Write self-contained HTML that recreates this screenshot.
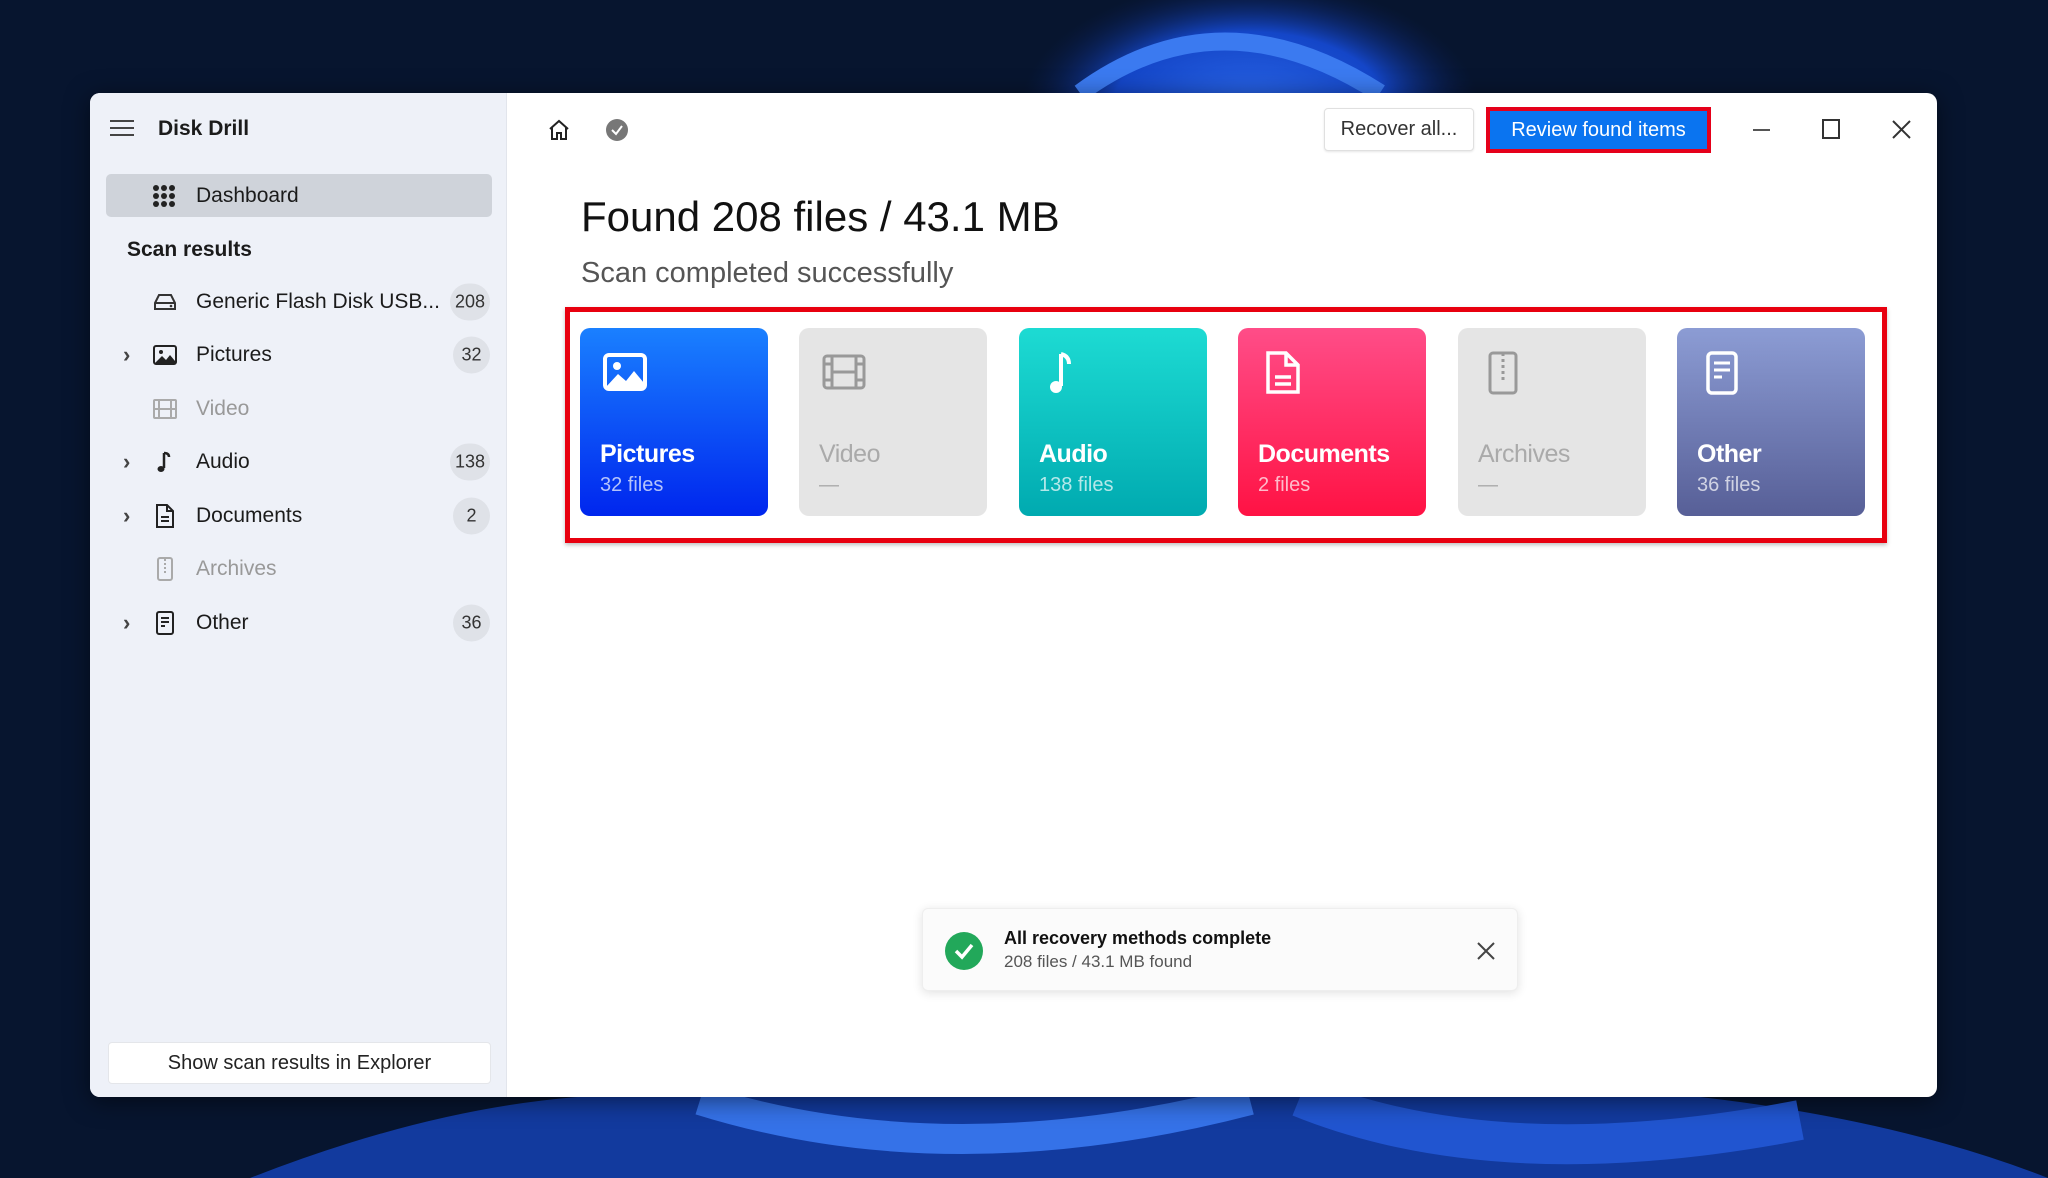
<!DOCTYPE html>
<html><head><meta charset="utf-8"><style>
*{box-sizing:border-box;margin:0;padding:0}
body{width:2048px;height:1178px;overflow:hidden;position:relative;font-family:"Liberation Sans",sans-serif;background:#06122b}
.bg{position:absolute;inset:0}
.win{position:absolute;left:90px;top:93px;width:1847px;height:1004px;background:#fff;border-radius:10px;overflow:hidden;box-shadow:0 4px 24px rgba(0,0,0,.5)}
.side{position:absolute;left:0;top:0;width:417px;height:100%;background:#eef1f8;border-right:1px solid #e2e5ec}
.abs{position:absolute}
.t{position:absolute;white-space:nowrap}
.row{position:absolute;left:0;width:417px;height:40px}
.row .lbl{position:absolute;left:106px;top:50%;transform:translateY(-50%);font-size:21px;color:#1b1b1b}
.row .ic{position:absolute;left:62px;top:50%;transform:translateY(-50%);width:26px;height:26px}
.row .chev{position:absolute;left:33px;top:50%;transform:translateY(-50%);font-size:22px;color:#444;font-weight:bold}
.badge{position:absolute;right:-1px;top:50%;transform:translateY(-50%);min-width:37px;height:37px;border-radius:19px;background:#dfe2e8;font-size:18px;color:#333;text-align:center;line-height:37px;padding:0 5px}
.card{position:absolute;top:235px;width:188px;height:188px;border-radius:10px}
.card .n{position:absolute;left:20px;top:112px;font-size:25px;font-weight:bold;color:#fff;letter-spacing:-0.5px}
.card .s{position:absolute;left:20px;top:146px;font-size:20px;color:rgba(255,255,255,.7)}
.card svg{position:absolute;left:22px;top:22px}
.gray{background:#e5e5e5}.gray .n{color:#aaa;font-weight:normal}.gray .s{color:#aaa}
</style></head><body>
<svg class="bg" width="2048" height="1178">
<defs>
<radialGradient id="g1" cx="0.5" cy="0.5" r="0.5"><stop offset="0" stop-color="#2a66e8"/><stop offset="0.6" stop-color="#1446c8"/><stop offset="1" stop-color="#0a1d55" stop-opacity="0"/></radialGradient>
</defs>
<rect width="2048" height="1178" fill="#07152f"/>
<ellipse cx="1250" cy="110" rx="230" ry="130" fill="url(#g1)"/>
<path d="M1080 93 Q1220 -10 1380 93" stroke="#3b7af0" stroke-width="18" fill="none"/>
<path d="M250 1178 Q500 1080 700 1097 L1700 1097 Q1900 1120 2048 1178 Z" fill="#123a9e"/>
<path d="M700 1100 Q950 1178 1250 1100" stroke="#3572e8" stroke-width="30" fill="none"/>
<path d="M1300 1097 Q1500 1178 1800 1120" stroke="#2155d0" stroke-width="40" fill="none"/>
</svg>
<div class="win">
 <div class="side">
  <svg class="abs" style="left:20px;top:26px" width="24" height="18"><path d="M0 2H24M0 9H24M0 16H24" stroke="#444" stroke-width="2"/></svg>
  <div class="t" style="left:68px;top:24px;font-size:21px;color:#1b1b1b;font-weight:bold">Disk Drill</div>
  <div class="abs" style="left:16px;top:81px;width:386px;height:43px;background:#cfd3da;border-radius:5px"></div>
  <svg class="abs" style="left:63px;top:92px" width="22" height="22"><g fill="#222"><circle cx="3" cy="3" r="3"/><circle cx="11" cy="3" r="3"/><circle cx="19" cy="3" r="3"/><circle cx="3" cy="11" r="3"/><circle cx="11" cy="11" r="3"/><circle cx="19" cy="11" r="3"/><circle cx="3" cy="19" r="3"/><circle cx="11" cy="19" r="3"/><circle cx="19" cy="19" r="3"/></g></svg>
  <div class="t" style="left:106px;top:91px;font-size:21px;color:#1b1b1b">Dashboard</div>
  <div class="t" style="left:37px;top:145px;font-size:21px;color:#1b1b1b;font-weight:bold">Scan results</div>
  <div class="row" style="top:189px;width:399px"><svg class="ic" viewBox="0 0 26 26"><path d="M3 14L7 6H19L23 14V20H3Z M3 14H23" stroke="#333" stroke-width="2" fill="none"/><circle cx="19" cy="17" r="1.3" fill="#333"/></svg><span class="lbl">Generic Flash Disk USB...</span><span class="badge">208</span></div>
  <div class="row" style="top:242px;width:399px"><span class="chev">›</span><svg class="ic" viewBox="0 0 26 26"><rect x="2" y="4" width="22" height="18" rx="2" stroke="#222" stroke-width="2" fill="none"/><circle cx="9" cy="10" r="2" fill="#222"/><path d="M3 21L10 14L14 18L18 13L23 19V21Z" fill="#222"/></svg><span class="lbl">Pictures</span><span class="badge">32</span></div>
  <div class="row" style="top:296px;width:399px"><svg class="ic" viewBox="0 0 26 26"><rect x="2" y="4" width="22" height="18" rx="1" stroke="#aaa" stroke-width="2" fill="none"/><path d="M7 4V22M19 4V22M2 13H24" stroke="#aaa" stroke-width="2"/></svg><span class="lbl" style="color:#999">Video</span></div>
  <div class="row" style="top:349px;width:399px"><span class="chev">›</span><svg class="ic" viewBox="0 0 26 26"><path d="M12 4V19" stroke="#222" stroke-width="2.5"/><path d="M12 4Q17 4 17 8" stroke="#222" stroke-width="2.5" fill="none"/><ellipse cx="9" cy="20" rx="3.5" ry="3" fill="#222"/></svg><span class="lbl">Audio</span><span class="badge">138</span></div>
  <div class="row" style="top:403px;width:399px"><span class="chev">›</span><svg class="ic" viewBox="0 0 26 26"><path d="M5 2H15L21 8V24H5Z M15 2V8H21 M9 14H17M9 18H17" stroke="#222" stroke-width="2" fill="none"/></svg><span class="lbl">Documents</span><span class="badge">2</span></div>
  <div class="row" style="top:456px;width:399px"><svg class="ic" viewBox="0 0 26 26"><rect x="6" y="2" width="14" height="22" rx="2" stroke="#aaa" stroke-width="2" fill="none"/><path d="M13 3V17" stroke="#aaa" stroke-width="2" stroke-dasharray="2 2"/></svg><span class="lbl" style="color:#999">Archives</span></div>
  <div class="row" style="top:510px;width:399px"><span class="chev">›</span><svg class="ic" viewBox="0 0 26 26"><rect x="5" y="2" width="16" height="22" rx="2" stroke="#222" stroke-width="2" fill="none"/><path d="M9 8H17M9 12H17M9 16H13" stroke="#222" stroke-width="2"/></svg><span class="lbl">Other</span><span class="badge">36</span></div>
  <div class="abs" style="left:18px;top:949px;width:383px;height:42px;background:#fff;border:1px solid #e4e6ea;border-radius:4px;text-align:center;line-height:40px;font-size:20px;color:#222">Show scan results in Explorer</div>
 </div>
 <svg class="abs" style="left:457px;top:25px" width="24" height="24" viewBox="0 0 24 24"><path d="M3 11L12 3L21 11M5 9V21H10V15H14V21H19V9" stroke="#222" stroke-width="2" fill="none"/></svg>
 <svg class="abs" style="left:515px;top:25px" width="24" height="24"><circle cx="12" cy="12" r="11" fill="#777"/><path d="M7 12L11 16L17 8" stroke="#fff" stroke-width="2" fill="none"/></svg>
 <div class="abs" style="left:1234px;top:15px;width:150px;height:43px;border:1px solid #e0e0e0;border-radius:4px;background:#fff;text-align:center;line-height:41px;font-size:20px;color:#333;box-shadow:0 1px 2px rgba(0,0,0,.1)">Recover all...</div>
 <div class="abs" style="left:1396px;top:14px;width:225px;height:46px;border:4px solid #e5001a;background:#0a74f0;text-align:center;line-height:38px;font-size:20px;color:#fff">Review found items</div>
 <div class="abs" style="left:1663px;top:36px;width:17px;height:2px;background:#555"></div>
 <div class="abs" style="left:1732px;top:26px;width:18px;height:20px;border:2px solid #333"></div>
 <svg class="abs" style="left:1802px;top:27px" width="19" height="19"><path d="M1 1L18 18M18 1L1 18" stroke="#333" stroke-width="2"/></svg>
 <div class="t" style="left:491px;top:100px;font-size:42px;color:#111">Found 208 files / 43.1 MB</div>
 <div class="t" style="left:491px;top:164px;font-size:29px;color:#555">Scan completed successfully</div>
 <div class="abs" style="left:475px;top:214px;width:1322px;height:236px;border:5px solid #e8000f;box-shadow:0 2px 4px rgba(0,0,0,.25)"></div>
 <div class="card" style="left:490px;background:linear-gradient(#1a80ff,#0026ee)"><svg width="46" height="46" viewBox="0 0 46 46"><rect x="3" y="5" width="40" height="34" rx="4" stroke="#fff" stroke-width="4" fill="none"/><circle cx="15" cy="16" r="4" fill="#fff"/><path d="M4 37L16 24L24 31L32 21L42 33V38H4Z" fill="#fff"/></svg><div class="n">Pictures</div><div class="s">32 files</div></div>
 <div class="card gray" style="left:709px"><svg width="46" height="46" viewBox="0 0 46 46"><rect x="3" y="6" width="40" height="32" rx="3" stroke="#999" stroke-width="3" fill="none"/><path d="M11 6V38M35 6V38M11 22H35M3 14H11M3 30H11M35 14H43M35 30H43" stroke="#999" stroke-width="3"/></svg><div class="n">Video</div><div class="s">—</div></div>
 <div class="card" style="left:929px;background:linear-gradient(#1ddbd3,#00aab0)"><svg width="46" height="46" viewBox="0 0 46 46"><path d="M20 4V36" stroke="#fff" stroke-width="4"/><path d="M20 4Q28 6 28 14" stroke="#fff" stroke-width="4" fill="none"/><ellipse cx="15" cy="37" rx="6" ry="6" fill="#fff"/></svg><div class="n">Audio</div><div class="s">138 files</div></div>
 <div class="card" style="left:1148px;background:linear-gradient(#ff4d88,#ff1244)"><svg width="46" height="46" viewBox="0 0 46 46"><path d="M8 3H26L38 15V42H8Z M26 3V15H38 M15 27H31M15 34H31" stroke="#fff" stroke-width="3.5" fill="none"/></svg><div class="n">Documents</div><div class="s">2 files</div></div>
 <div class="card gray" style="left:1368px"><svg width="46" height="46" viewBox="0 0 46 46"><rect x="10" y="3" width="26" height="40" rx="3" stroke="#999" stroke-width="3" fill="none"/><path d="M23 3V30" stroke="#999" stroke-width="3" stroke-dasharray="3 3"/></svg><div class="n">Archives</div><div class="s">—</div></div>
 <div class="card" style="left:1587px;background:linear-gradient(#8c9cd4,#575f97)"><svg width="46" height="46" viewBox="0 0 46 46"><rect x="9" y="3" width="28" height="40" rx="4" stroke="#fff" stroke-width="3.5" fill="none"/><path d="M15 13H31M15 20H31M15 27H23" stroke="#fff" stroke-width="3"/></svg><div class="n">Other</div><div class="s">36 files</div></div>
 <div class="abs" style="left:832px;top:815px;width:596px;height:83px;background:#fbfbfb;border:1px solid #eee;border-radius:6px;box-shadow:0 2px 10px rgba(0,0,0,.12)">
  <svg class="abs" style="left:21px;top:22px" width="40" height="40"><circle cx="20" cy="20" r="19" fill="#22a85a"/><path d="M12 20L18 26L28 14" stroke="#fff" stroke-width="3.5" fill="none"/></svg>
  <div class="t" style="left:81px;top:19px;font-size:18px;font-weight:bold;color:#111">All recovery methods complete</div>
  <div class="t" style="left:81px;top:43px;font-size:17px;color:#555">208 files / 43.1 MB found</div>
  <svg class="abs" style="left:554px;top:33px" width="18" height="18" viewBox="0 0 18 18"><path d="M1 1L17 17M17 1L1 17" stroke="#444" stroke-width="2"/></svg>
 </div>
</div>
</body></html>
